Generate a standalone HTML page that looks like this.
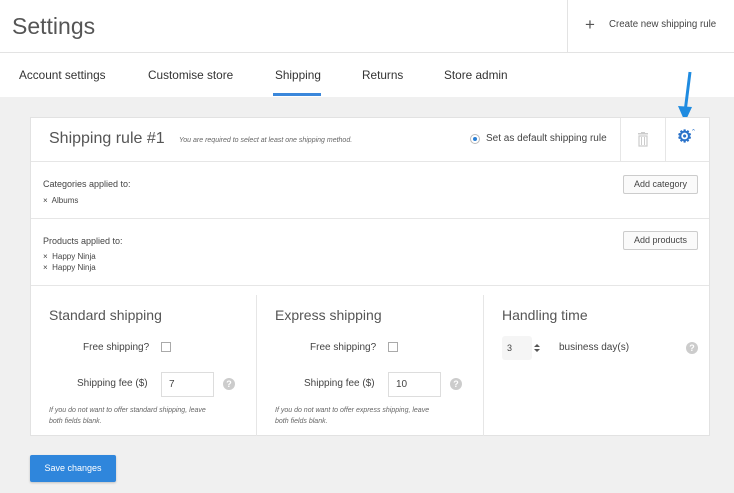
<!DOCTYPE html>
<html><head><style>
*{margin:0;padding:0;box-sizing:border-box}
body{width:734px;height:493px;background:#f0f0f0;font-family:"Liberation Sans",sans-serif;color:#444;position:relative;overflow:hidden}
.a{position:absolute}
.top{left:0;top:0;width:734px;height:97px;background:#fff}
.ttl{left:12px;top:13px;font-size:23px;color:#555}
.btn{border:1px solid #ccc;border-radius:2px;background:#fafafa;font-size:9px;color:#444;text-align:center}
.q{width:12px;height:12px;border-radius:50%;background:#ccc;color:#fff;font-size:9px;font-weight:bold;text-align:center;line-height:12px}
.it{font-style:italic;font-size:7px;color:#666;line-height:11px}
.cb{width:10px;height:10px;border:1px solid #aaa;background:#fff}
.in{border:1px solid #ddd;background:#fff;font-size:10px;padding-left:7px;line-height:23px}
</style></head><body>
<div class="a top"></div>
<div class="a" style="left:0;top:52px;width:734px;height:1px;background:#e3e3e3"></div>
<div class="a" style="left:567px;top:0;width:1px;height:52px;background:#e3e3e3"></div>
<div class="a ttl">Settings</div>
<div class="a" style="left:585px;top:15px;font-size:17px;color:#555">+</div>
<div class="a" style="left:609px;top:19px;font-size:9.7px;color:#444">Create new shipping rule</div>
<div class="a" style="left:19px;top:68px;font-size:11.8px;color:#333">Account settings</div>
<div class="a" style="left:148px;top:68px;font-size:11.8px;color:#333">Customise store</div>
<div class="a" style="left:275px;top:68px;font-size:11.8px;color:#333">Shipping</div>
<div class="a" style="left:362px;top:68px;font-size:11.8px;color:#333">Returns</div>
<div class="a" style="left:444px;top:68px;font-size:11.8px;color:#333">Store admin</div>
<div class="a" style="left:273px;top:93px;width:48px;height:3px;background:#3a87db"></div>
<svg class="a" style="left:676px;top:70px" width="20" height="54"><line x1="14" y1="2" x2="9" y2="42" stroke="#1f8be0" stroke-width="3"/><path d="M2 36 L9 52 L16 37 Z" fill="#1f8be0"/></svg>
<div class="a" style="left:30px;top:117px;width:680px;height:319px;background:#fff;border:1px solid #e2e2e2"></div>
<div class="a" style="left:31px;top:161px;width:678px;height:1px;background:#e6e6e6"></div>
<div class="a" style="left:31px;top:218px;width:678px;height:1px;background:#e6e6e6"></div>
<div class="a" style="left:31px;top:285px;width:678px;height:1px;background:#e6e6e6"></div>
<div class="a" style="left:620px;top:118px;width:1px;height:43px;background:#e6e6e6"></div>
<div class="a" style="left:665px;top:118px;width:1px;height:43px;background:#e6e6e6"></div>
<div class="a" style="left:49px;top:130px;font-size:16px;color:#555">Shipping rule #1</div>
<div class="a it" style="left:179px;top:135px">You are required to select at least one shipping method.</div>
<div class="a" style="left:470px;top:134px;width:10px;height:10px;border:1px solid #bbb;border-radius:50%"><div style="margin:2px;width:4px;height:4px;border-radius:50%;background:#2a7fd4"></div></div>
<div class="a" style="left:486px;top:133px;font-size:10px;color:#444">Set as default shipping rule</div>
<svg class="a" style="left:637px;top:132px" width="12" height="15"><rect x="1" y="1" width="10" height="1.5" fill="#ccc"/><rect x="4" y="0" width="4" height="1.5" fill="#ccc"/><path d="M2 4 H10 V14 H2 Z" fill="none" stroke="#ccc" stroke-width="1.2"/><line x1="4.5" y1="5" x2="4.5" y2="13" stroke="#ccc"/><line x1="7.5" y1="5" x2="7.5" y2="13" stroke="#ccc"/></svg>
<div class="a" style="left:677px;top:127px;font-size:17px;color:#2a72c9;font-weight:bold">⚙</div>
<div class="a" style="left:692px;top:128px;font-size:9px;color:#2a72c9">ˆ</div>
<div class="a" style="left:43px;top:179px;font-size:9px">Categories applied to:</div>
<div class="a" style="left:43px;top:196px;font-size:8px">×&nbsp; Albums</div>
<div class="a btn" style="left:623px;top:175px;width:75px;height:19px;line-height:17px">Add category</div>
<div class="a" style="left:43px;top:236px;font-size:9px">Products applied to:</div>
<div class="a" style="left:43px;top:252px;font-size:8px">×&nbsp; Happy Ninja</div>
<div class="a" style="left:43px;top:263px;font-size:8px">×&nbsp; Happy Ninja</div>
<div class="a btn" style="left:623px;top:231px;width:75px;height:19px;line-height:17px">Add products</div>
<div class="a" style="left:256px;top:295px;width:1px;height:141px;background:#e6e6e6"></div>
<div class="a" style="left:483px;top:295px;width:1px;height:141px;background:#e6e6e6"></div>
<div class="a" style="left:49px;top:307px;font-size:14px;color:#555">Standard shipping</div>
<div class="a" style="left:83px;top:342px;font-size:10px">Free shipping?</div>
<div class="a cb" style="left:161px;top:342px"></div>
<div class="a" style="left:77px;top:378px;font-size:10px">Shipping fee ($)</div>
<div class="a in" style="left:161px;top:372px;width:53px;height:25px">7</div>
<div class="a q" style="left:223px;top:378px">?</div>
<div class="a it" style="left:49px;top:405px">If you do not want to offer standard shipping, leave<br>both fields blank.</div>
<div class="a" style="left:275px;top:307px;font-size:14px;color:#555">Express shipping</div>
<div class="a" style="left:310px;top:342px;font-size:10px">Free shipping?</div>
<div class="a cb" style="left:388px;top:342px"></div>
<div class="a" style="left:304px;top:378px;font-size:10px">Shipping fee ($)</div>
<div class="a in" style="left:388px;top:372px;width:53px;height:25px">10</div>
<div class="a q" style="left:450px;top:378px">?</div>
<div class="a it" style="left:275px;top:405px">If you do not want to offer express shipping, leave<br>both fields blank.</div>
<div class="a" style="left:502px;top:307px;font-size:14px;color:#555">Handling time</div>
<div class="a" style="left:502px;top:336px;width:30px;height:24px;background:#f5f5f5;border-radius:3px;font-size:9px;line-height:24px;padding-left:5px">3</div>
<svg class="a" style="left:534px;top:344px" width="6" height="8"><path d="M0 3 L3 0 L6 3Z M0 5 L3 8 L6 5Z" fill="#555"/></svg>
<div class="a" style="left:559px;top:342px;font-size:10px">business day(s)</div>
<div class="a q" style="left:686px;top:342px">?</div>
<div class="a" style="left:30px;top:455px;width:86px;height:27px;background:#2f86dc;border-radius:2px;color:#fff;font-size:9px;text-align:center;line-height:27px;box-shadow:0 1px 2px rgba(0,0,0,.2)">Save changes</div>
</body></html>
